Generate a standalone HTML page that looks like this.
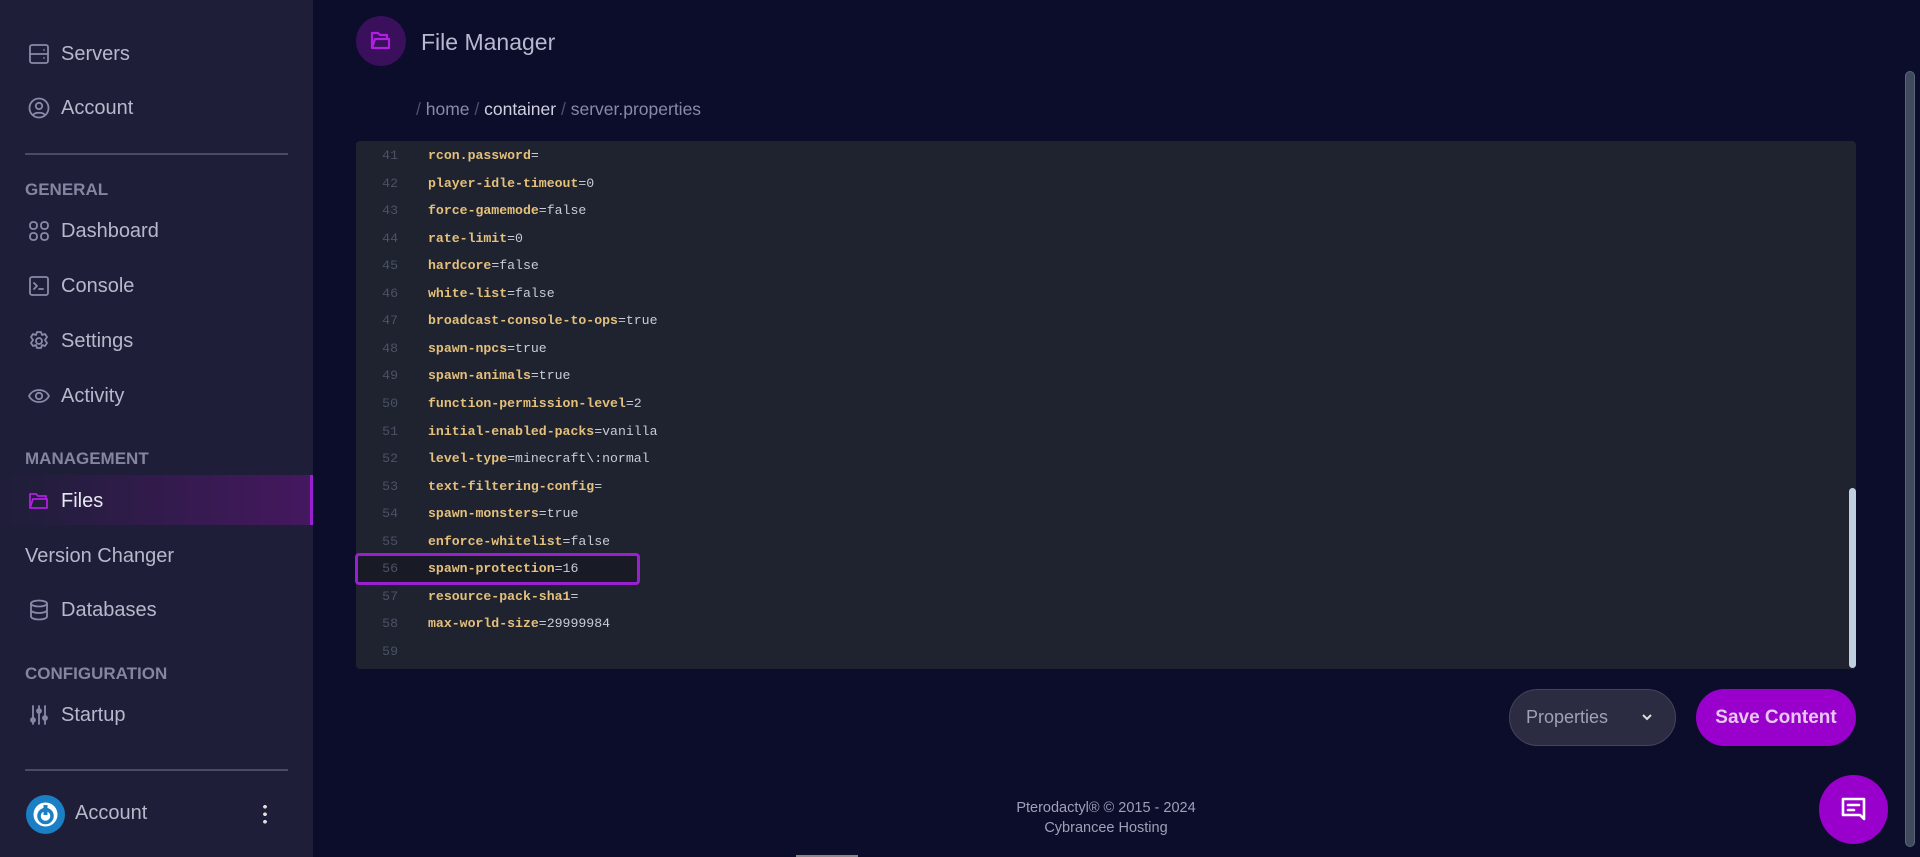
<!DOCTYPE html>
<html><head><meta charset="utf-8"><style>
*{box-sizing:border-box;margin:0;padding:0}
body{width:1920px;height:857px;overflow:hidden;background:#0c0c2b;font-family:"Liberation Sans",sans-serif;position:relative}
.sb{position:absolute;left:0;top:0;width:313px;height:857px;background:#1e1e38}
.it{position:absolute;left:27px;height:24px;display:flex;align-items:center;color:#b8b8cc;font-size:20px}
.it svg{width:24px;height:24px;margin-right:10px;stroke:#8a8aa8;fill:none;stroke-width:1.8;stroke-linecap:round;stroke-linejoin:round}
.hd{position:absolute;left:25px;color:#8585a0;font-size:17px;font-weight:bold}
.dv{position:absolute;left:25px;width:263px;height:2px;background:#4a4a62}
.ed{position:absolute;left:356px;top:141px;width:1500px;height:528px;background:#1f2330;border-radius:4px}
.ln{position:absolute;font-family:"Liberation Mono",monospace;font-size:13.2px;height:20px;line-height:20px}
.n{left:372px;width:26px;text-align:right;color:#4b5263}
.c{left:428px;color:#c8ccd4}
.k{color:#e5c07b;font-weight:bold}
</style></head><body>
<div class="sb">
<div class="it" style="top:42px"><svg viewBox="0 0 24 24"><rect x="3" y="3" width="18" height="18" rx="2"/><path d="M3 12h18M17 8h0M17 16h0"/></svg>Servers</div>
<div class="it" style="top:96px"><svg viewBox="0 0 24 24"><circle cx="12" cy="12" r="9.5"/><circle cx="12" cy="10" r="3.2"/><path d="M6 19c2-3 10-3 12 0"/></svg>Account</div>
<div class="dv" style="top:153px"></div>
<div class="hd" style="top:180px">GENERAL</div>
<div class="it" style="top:219px"><svg viewBox="0 0 24 24"><rect x="3" y="3" width="7" height="7" rx="3"/><rect x="14" y="3" width="7" height="7" rx="3"/><rect x="3" y="14" width="7" height="7" rx="3"/><rect x="14" y="14" width="7" height="7" rx="3"/></svg>Dashboard</div>
<div class="it" style="top:274px"><svg viewBox="0 0 24 24"><rect x="3" y="3" width="18" height="18" rx="2"/><path d="M7 9l3 3-3 3M12 15h4"/></svg>Console</div>
<div class="it" style="top:329px"><svg viewBox="0 0 24 24"><path d="M10 3h4l1 3 3-1 2 3-2 3 2 3-2 3-3-1-1 3h-4l-1-3-3 1-2-3 2-3-2-3 2-3 3 1z"/><circle cx="12" cy="12" r="3"/></svg>Settings</div>
<div class="it" style="top:384px"><svg viewBox="0 0 24 24"><path d="M2 12c4-8 16-8 20 0-4 8-16 8-20 0z"/><circle cx="12" cy="12" r="3.2"/></svg>Activity</div>
<div class="hd" style="top:449px">MANAGEMENT</div>
<div style="position:absolute;left:0;top:475px;width:313px;height:50px;background:linear-gradient(90deg,#1e1e38,#45185f);border-right:3px solid #9a1fd0"></div>
<div class="it" style="top:489px;color:#e8e8f0"><svg viewBox="0 0 24 24" style="stroke:#b020e0"><path d="M3 19V5h6l2 2h8v3M3 19h17V10H6z"/></svg>Files</div>
<div class="it" style="top:544px;left:25px">Version Changer</div>
<div class="it" style="top:598px"><svg viewBox="0 0 24 24"><ellipse cx="12" cy="5.5" rx="8" ry="3"/><path d="M4 5.5v13c0 1.7 3.6 3 8 3s8-1.3 8-3v-13M4 12c0 1.7 3.6 3 8 3s8-1.3 8-3"/></svg>Databases</div>
<div class="hd" style="top:664px">CONFIGURATION</div>
<div class="it" style="top:703px"><svg viewBox="0 0 24 24"><path d="M6 3v18M12 3v18M18 3v18"/><circle cx="6" cy="17" r="2"/><circle cx="12" cy="8" r="2"/><circle cx="18" cy="15" r="2"/></svg>Startup</div>
<div class="dv" style="top:769px"></div>
<div style="position:absolute;left:26px;top:795px;width:39px;height:39px;border-radius:50%;background:#1a7fc4"></div>
<svg style="position:absolute;left:26px;top:795px" width="39" height="39" viewBox="0 0 39 39"><circle cx="19.5" cy="19.5" r="12" fill="#fff"/><circle cx="19.5" cy="21" r="6.5" fill="none" stroke="#1a7fc4" stroke-width="3.5"/><path d="M19.5 10v10" stroke="#1a7fc4" stroke-width="4"/></svg>
<div style="position:absolute;left:75px;top:802px;color:#b8b8cc;font-size:20px">Account</div>
<div style="position:absolute;left:263px;top:803px;width:4px;height:22px;background:radial-gradient(circle,#ddd 1.8px,transparent 2px) 0 0/4px 7.5px"></div>
</div>
<div style="position:absolute;left:356px;top:16px;width:50px;height:50px;border-radius:50%;background:#3a0f5c"></div>
<svg style="position:absolute;left:369px;top:29px" width="24" height="24" viewBox="0 0 24 24" fill="none" stroke="#b020e0" stroke-width="2.2" stroke-linejoin="round"><path d="M3 19V4h6l2 2h7v4M3 19h17V10H6z"/></svg>
<div style="position:absolute;left:421px;top:29px;color:#b8b8d0;font-size:23px">File Manager</div>
<div style="position:absolute;left:416px;top:99px;font-size:17.5px;color:#8a8aa8"><span style="color:#50506a">/ </span>home <span style="color:#50506a">/ </span><span style="color:#d0d0e0">container</span> <span style="color:#50506a">/ </span>server.properties</div>
<div class="ed"></div>
<div style="position:absolute;left:355px;top:553px;width:285px;height:32px;border:3px solid #9a1fd0;border-radius:4px;background:#181b26"></div>
<div id="code"></div>
<div style="position:absolute;left:1849px;top:488px;width:7px;height:180px;background:#c0d0e0;border-radius:4px"></div>
<div style="position:absolute;left:1905px;top:71px;width:10px;height:776px;background:#3f4b5c;border:1px solid #5a6678;border-radius:5px"></div>
<div style="position:absolute;left:1509px;top:689px;width:167px;height:57px;border-radius:29px;background:#2b2b42;border:1px solid #44445a;color:#a0a0b8;font-size:18px;line-height:55px;padding-left:16px">Properties<svg style="position:absolute;right:22px;top:22px" width="12" height="10" viewBox="0 0 12 10"><path d="M2 3l4 4 4-4" fill="none" stroke="#ddd" stroke-width="2"/></svg></div>
<div style="position:absolute;left:1696px;top:689px;width:160px;height:57px;border-radius:29px;background:#9a00cc;color:#e6c8f0;font-size:19px;font-weight:bold;text-align:center;line-height:57px">Save Content</div>
<div style="position:absolute;left:1819px;top:775px;width:69px;height:69px;border-radius:50%;background:#9a00cc"></div>
<svg style="position:absolute;left:1839px;top:795px" width="29" height="29" viewBox="0 0 29 29" fill="none" stroke="#fff" stroke-width="2.6" stroke-linejoin="round" stroke-linecap="round"><path d="M4 4h21v20l-4-4H4z"/><path d="M9 10h11M9 15h6"/></svg>
<div style="position:absolute;left:906px;top:798px;width:400px;text-align:center;color:#a0a0b8;font-size:14.5px;line-height:20px">Pterodactyl® © 2015 - 2024<br>Cybrancee Hosting</div>
<div style="position:absolute;left:796px;top:855px;width:62px;height:2px;background:#888"></div>
<script>
var L=[["rcon.password",""],["player-idle-timeout","0"],["force-gamemode","false"],["rate-limit","0"],["hardcore","false"],["white-list","false"],["broadcast-console-to-ops","true"],["spawn-npcs","true"],["spawn-animals","true"],["function-permission-level","2"],["initial-enabled-packs","vanilla"],["level-type","minecraft\\:normal"],["text-filtering-config",""],["spawn-monsters","true"],["enforce-whitelist","false"],["spawn-protection","16"],["resource-pack-sha1",""],["max-world-size","29999984"],null];
var h="";L.forEach(function(l,i){var t=146+i*27.55;h+='<div class="ln n" style="top:'+t+'px">'+(41+i)+'</div>';if(l)h+='<div class="ln c" style="top:'+t+'px"><span class="k">'+l[0]+'</span>='+l[1]+'</div>';});
document.getElementById("code").innerHTML=h;
</script>
</body></html>
